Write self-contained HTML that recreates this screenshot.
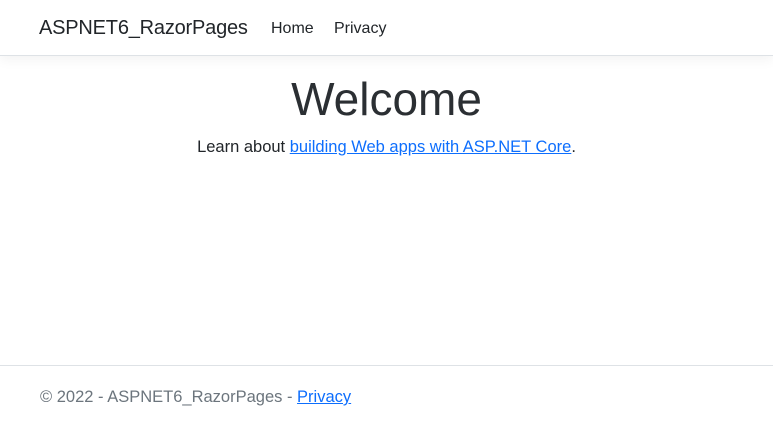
<!DOCTYPE html>
<html><head><meta charset="utf-8"><style>
*{box-sizing:border-box}
body{margin:0;width:773px;height:423px;font-family:"Liberation Sans",sans-serif;color:#212529;background:#fff;position:relative;overflow:hidden}
.nav{height:56px;border-bottom:1px solid #dee2e6;box-shadow:0 .25rem .75rem rgba(0,0,0,.05);position:relative}
.brand{position:absolute;left:39px;top:17px;font-size:20px;color:#212529;letter-spacing:-0.2px}
.l{position:absolute;top:20px;font-size:16px;color:#212529}
h1{position:absolute;top:72px;left:0;width:773px;text-align:center;margin:0;font-weight:300;font-size:46px;line-height:1.2;color:#2b2f33}
.p{position:absolute;top:138px;left:0;width:773px;text-align:center;font-size:16.5px}
a{color:#0d6efd;text-decoration:underline}
.foot{position:absolute;top:365px;left:0;width:773px;border-top:1px solid #dee2e6;height:58px}
.ft{position:absolute;left:40px;top:22px;font-size:16.5px;color:#6c757d}
</style></head><body>
<div class="nav"><span class="brand">ASPNET6_RazorPages</span><span class="l" style="left:271px">Home</span><span class="l" style="left:334px">Privacy</span></div>
<h1>Welcome</h1>
<div class="p">Learn about <a>building Web apps with ASP.NET Core</a>.</div>
<div class="foot"><div class="ft">© 2022 - ASPNET6_RazorPages - <a>Privacy</a></div></div>
</body></html>
